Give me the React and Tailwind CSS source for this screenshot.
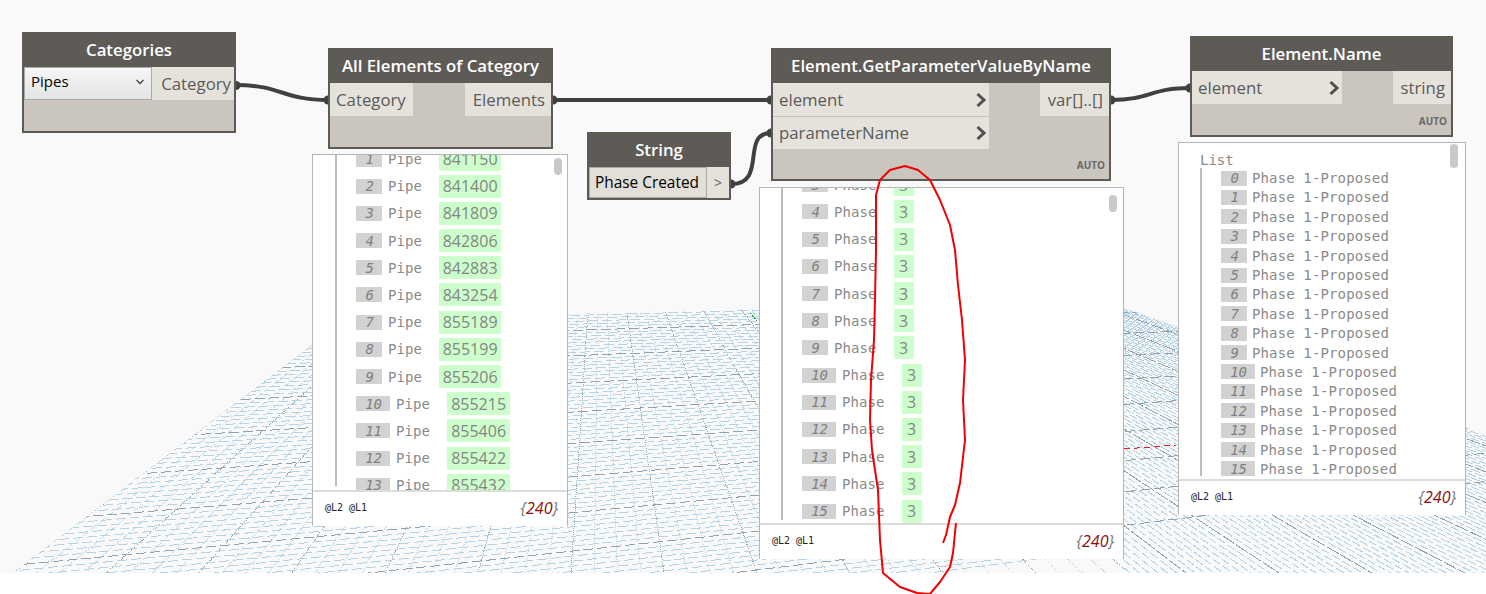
import React from "react";

const VA = [600, 125];
const VB = [3500, 237];

function Grid() {
  const a = [];
  const dy = 573 - VA[1];
  const t = 800;
  for (let k = -4; k < 60; k++) {
    const px = 13 + k * 23.25;
    a.push(
      <line
        key={"a" + k}
        x1={VA[0]}
        y1={VA[1]}
        x2={VA[0] + ((px - VA[0]) * t) / dy}
        y2={VA[1] + t}
        stroke={k % 4 === 0 ? "#8fa3b3" : "#bcd6e7"}
        strokeWidth="1"
        strokeDasharray="1 1"
      />
    );
  }
  const r = [];
  for (let k = 0; k < 100; k++) {
    const px = 1000 + k * 9.3;
    r.push(
      <line
        key={"r" + k}
        x1={VA[0]}
        y1={VA[1]}
        x2={VA[0] + ((px - VA[0]) * t) / dy}
        y2={VA[1] + t}
        stroke={k % 10 === 0 ? "#8fa3b3" : "#b5d3e6"}
        strokeWidth="1"
        strokeDasharray={k % 10 === 0 ? "14 2" : "9 3"}
        strokeDashoffset={(k * 5) % 12}
      />
    );
  }
  const b = [];
  const bm = [];
  let y = 298;
  let i = 0;
  while (y < 660) {
    const major = i % 8 === 5;
    const sl = (VB[1] - y) / (VB[0] - 300);
    const line = (
      <line
        key={"b" + i}
        x1={-20}
        y1={y + sl * -320}
        x2={1500}
        y2={y + sl * 1200}
        stroke={major ? "#8fa3b3" : "#b5d3e6"}
        strokeWidth="1"
        strokeDasharray="10 4"
        strokeDashoffset={(i * 5) % 14}
      />
    );
    b.push(line);
    if (major) bm.push(line);
    y += 3 + ((y - 298) / 275) * 2.4;
    i++;
  }
  return (
    <svg className="absolute left-0 top-0" width="1486" height="594" shapeRendering="crispEdges">
      <defs>
        <clipPath id="gridclip">
          <polygon points="13,573 345,320 1100,300 1124,308 1124,573" />
        </clipPath>
        <clipPath id="gridclipr">
          <polygon points="1124,308 1486,435 1486,573 1124,573" />
        </clipPath>
      </defs>
      <g clipPath="url(#gridclip)">
        {a}
        {b}
      </g>
      <g clipPath="url(#gridclipr)">
        {r}
        {bm}
      </g>
      <line x1="750" y1="313" x2="758" y2="322" stroke="#1a9a3a" strokeWidth="1" strokeDasharray="2 1" />
      <line x1="1124" y1="449" x2="1176" y2="445" stroke="#e02020" strokeWidth="1" strokeDasharray="6 4" />
    </svg>
  );
}

function Wires() {
  return (
    <svg className="absolute left-0 top-0" width="1486" height="594" fill="none">
      <g stroke="#404040" strokeWidth="4">
        <path d="M236 85 C282 85 282 100 328 100" />
        <path d="M553 100 L771 100" />
        <path d="M731 184 C768 184 740 133 771 133" />
        <path d="M1111 100 C1150 100 1150 88 1190 88" />
      </g>
      <g fill="#404040">
        <path d="M236 81 a4.5 4.5 0 0 1 0 9 z" />
        <path d="M553 95.5 a4.5 4.5 0 0 1 0 9 z" />
        <path d="M731 179.5 a4.5 4.5 0 0 1 0 9 z" />
        <path d="M1111 95.5 a4.5 4.5 0 0 1 0 9 z" />
        <path d="M328 95.5 a4.5 4.5 0 0 0 0 9 z" />
        <path d="M771 95.5 a4.5 4.5 0 0 0 0 9 z" />
        <path d="M771 128.5 a4.5 4.5 0 0 0 0 9 z" />
        <path d="M1190 83.5 a4.5 4.5 0 0 0 0 9 z" />
      </g>
    </svg>
  );
}

function Scribble() {
  return (
    <svg className="absolute left-0 top-0" width="1486" height="594" fill="none">
      <path
        d="M943 543 L946 535 L950 517 L955 505 L960 483 L965 440 L963 400 L965 360 L962 320 L958 285 L955 250 L950 225 L940 200 L930 180 L918 170 L905 166 L890 170 L880 180 L876 195 L876 250 L875 300 L874 340 L871 380 L870 420 L872 450 L878 490 L880 540 L883 573 L900 587 L917 593 L930 594 L940 582 L950 567 L953 553 L956 523"
        stroke="#f00000"
        strokeWidth="2"
        strokeLinejoin="round"
      />
    </svg>
  );
}

function Chevron() {
  return (
    <svg width="12" height="16" viewBox="0 0 12 16" fill="none">
      <path d="M2.5 2 L9 8 L2.5 14" stroke="#4f4f4f" strokeWidth="3" />
    </svg>
  );
}

function Title({ children }) {
  return (
    <div className="h-[35px] shrink-0 pt-[2px] bg-[#5e5b57] flex items-center justify-center text-white text-[16.8px] font-semibold leading-none">
      {children}
    </div>
  );
}

function Auto() {
  return <div className="absolute right-[4px] bottom-[9px] text-[10px] font-bold text-[#6b6864] leading-none">AUTO</div>;
}

function Idx({ n }) {
  const two = n > 9;
  return (
    <div
      className={
        two
          ? "w-[34px] h-[15px] shrink-0 bg-[#d2d2d2] flex items-center justify-end pr-[8px] text-[14px] italic text-[#808080] leading-none"
          : "w-[26px] h-[15px] shrink-0 bg-[#d2d2d2] flex items-center justify-end pr-[8px] text-[14px] italic text-[#808080] leading-none"
      }
    >
      {n}
    </div>
  );
}

function Footer() {
  return (
    <div className="h-[36px] shrink-0 border-t-2 border-[#dcdcdc] bg-white flex items-center justify-between pl-[12px] pr-[9px] pb-[2px]">
      <span className="text-[10px] text-[#222] font-['DejaVu_Sans_Mono',monospace] leading-none">@L2 @L1</span>
      <span className="text-[16px] italic leading-none font-['Open_Sans',sans-serif] text-[#8b1010]">
        <span className="text-[#777]">{"{"}</span>240<span className="text-[#777]">{"}"}</span>
      </span>
    </div>
  );
}

function WideRows({ rows, label, val, valW2, valW }) {
  return rows.map((n) => (
    <div key={n} className="h-[27.2px] shrink-0 flex items-center">
      <Idx n={n} />
      <span className="ml-[6px] text-[14px] tracking-[0.1px] text-[#8a8a8a] leading-none whitespace-nowrap">{label}</span>
      <span
        className="h-[23px] bg-[#ccffcc] flex items-center justify-center text-[16px] text-[#858585] font-['Open_Sans',sans-serif] leading-none"
        style={{ width: valW, marginLeft: valW2 }}
      >
        {val[n]}
      </span>
    </div>
  ));
}

const pipeVals = {
  1: "841150", 2: "841400", 3: "841809", 4: "842806", 5: "842883", 6: "843254", 7: "855189",
  8: "855199", 9: "855206", 10: "855215", 11: "855406", 12: "855422", 13: "855432",
};
const threes = Object.fromEntries(Array.from({ length: 16 }, (_, i) => [i, "3"]));

function Scrollbar({ className }) {
  return <div className={"absolute w-[8px] bg-[#c9c9c9] rounded-[4px] " + className} />;
}

export default function App() {
  return (
    <div className="relative w-[1486px] h-[594px] overflow-hidden bg-white font-['Open_Sans',sans-serif]">
      <div className="h-[573px] bg-[#f9f9f9]" />
      <Grid />
      <Wires />

      {/* Categories */}
      <div className="absolute left-[22px] top-[32px] w-[214px] h-[101px] flex flex-col bg-[#cac6bf] border-2 border-t-0 border-[#5e5b57] box-border">
        <div className="-mx-[2px]"><Title>Categories</Title></div>
        <div className="h-[33px] flex">
          <div className="w-[128px] flex items-center justify-between pl-[6px] pr-[6px] border border-[#aaa] bg-gradient-to-b from-[#f6f6f6] to-[#e4e4e4] text-[15px] text-black">
            <span className="-mt-[5px]">Pipes</span>
            <svg width="10" height="10" viewBox="0 0 10 10" fill="none" className="-mt-[4px]"><path d="M1.5 3 L5 6.5 L8.5 3" stroke="#444" strokeWidth="1.3" /></svg>
          </div>
          <div className="flex-1 bg-[#e5e2dc] flex items-center justify-end pr-[3px] text-[16.8px] text-[#5a5a5a]">Category</div>
        </div>
      </div>

      {/* All Elements of Category */}
      <div className="absolute left-[328px] top-[48px] w-[225px] h-[101px] flex flex-col bg-[#cac6bf] border-2 border-t-0 border-[#5e5b57] box-border">
        <div className="-mx-[2px]"><Title>All Elements of Category</Title></div>
        <div className="h-[33px] flex justify-between">
          <div className="w-[83px] bg-[#e5e2dc] flex items-center pl-[6px] text-[16.8px] text-[#5a5a5a]">Category</div>
          <div className="w-[86px] bg-[#e5e2dc] flex items-center justify-end pr-[6px] text-[16.8px] text-[#5a5a5a]">Elements</div>
        </div>
      </div>

      {/* GetParameterValueByName */}
      <div className="absolute left-[771px] top-[48px] w-[340px] h-[133px] flex flex-col bg-[#cac6bf] border-2 border-t-0 border-[#5e5b57] box-border">
        <div className="-mx-[2px]"><Title>Element.GetParameterValueByName</Title></div>
        <div className="flex justify-between">
          <div className="w-[216px] flex flex-col gap-[1px]">
            <div className="h-[33px] bg-[#e5e2dc] flex items-center justify-between pl-[6px] pr-[2px] text-[16.8px] text-[#5a5a5a]">element<Chevron /></div>
            <div className="h-[32px] bg-[#e5e2dc] flex items-center justify-between pl-[6px] pr-[2px] text-[16.8px] text-[#5a5a5a]">parameterName<Chevron /></div>
          </div>
          <div className="w-[69px] h-[33px] bg-[#e5e2dc] flex items-center justify-end pr-[6px] text-[16.8px] text-[#5a5a5a]">var[]..[]</div>
        </div>
        <Auto />
      </div>

      {/* String */}
      <div className="absolute left-[587px] top-[132px] w-[144px] h-[68px] flex flex-col bg-[#cac6bf] border-2 border-t-0 border-[#5e5b57] box-border">
        <div className="-mx-[2px]"><Title>String</Title></div>
        <div className="flex-1 flex">
          <div className="w-[118px] bg-[#e2dfd8] border border-[#aaa] flex items-center pl-[5px] text-[15.4px] text-black whitespace-nowrap">Phase Created</div>
          <div className="flex-1 bg-[#e5e2dc] flex items-center justify-center text-[14px] text-[#666]">&gt;</div>
        </div>
      </div>

      {/* Element.Name */}
      <div className="absolute left-[1190px] top-[36px] w-[263px] h-[101px] flex flex-col bg-[#cac6bf] border-2 border-t-0 border-[#5e5b57] box-border">
        <div className="-mx-[2px]"><Title>Element.Name</Title></div>
        <div className="h-[33px] flex justify-between">
          <div className="w-[150px] bg-[#e5e2dc] flex items-center justify-between pl-[6px] pr-[2px] text-[16.8px] text-[#5a5a5a]">element<Chevron /></div>
          <div className="w-[58px] bg-[#e5e2dc] flex items-center justify-end pr-[6px] text-[16.8px] text-[#5a5a5a]">string</div>
        </div>
        <Auto />
      </div>

      {/* Panel 1 */}
      <div className="absolute left-[312px] top-[154px] w-[256px] h-[372px] flex flex-col bg-white border border-[#b5b5b5] border-b-0 font-['DejaVu_Sans_Mono',monospace]">
        <div className="relative flex-1 overflow-hidden">
          <div className="absolute left-[22px] top-0 bottom-[4px] w-[2px] bg-[#bdbdbd]" />
          <div className="pl-[43px] -mt-[9.6px] flex flex-col">
            <WideRows rows={[1, 2, 3, 4, 5, 6, 7, 8, 9]} label="Pipe" val={pipeVals} valW={62} valW2={17} />
            <WideRows rows={[10, 11, 12, 13]} label="Pipe" val={pipeVals} valW={63} valW2={17} />
          </div>
          <Scrollbar className="left-[241px] top-[3px] h-[17px]" />
        </div>
        <Footer />
      </div>

      {/* Panel 2 */}
      <div className="absolute left-[759px] top-[187px] w-[365px] h-[372px] flex flex-col bg-white border border-[#b5b5b5] border-b-0 font-['DejaVu_Sans_Mono',monospace]">
        <div className="relative flex-1 overflow-hidden">
          <div className="absolute left-[21px] top-0 bottom-[3px] w-[2px] bg-[#bdbdbd]" />
          <div className="pl-[42px] -mt-[16.8px] flex flex-col">
            <WideRows rows={[3, 4, 5, 6, 7, 8, 9]} label="Phase" val={threes} valW={20} valW2={17} />
            <WideRows rows={[10, 11, 12, 13, 14, 15]} label="Phase" val={threes} valW={20} valW2={17} />
          </div>
          <Scrollbar className="left-[349px] top-[7px] h-[17px]" />
        </div>
        <Footer />
      </div>

      {/* Panel 3 */}
      <div className="absolute left-[1178px] top-[142px] w-[288px] h-[373px] flex flex-col bg-white border border-[#b5b5b5] border-b-0 font-['DejaVu_Sans_Mono',monospace]">
        <div className="relative flex-1 overflow-hidden">
          <div className="absolute left-[21px] top-[25px] bottom-[3px] w-[2px] bg-[#bdbdbd]" />
          <div className="pl-[21px] pt-[10px] text-[14px] text-[#8a8a8a] leading-none">List</div>
          <div className="pl-[42px] pt-[1.4px] flex flex-col">
            {Array.from({ length: 16 }, (_, n) => (
              <div key={n} className="h-[19.4px] shrink-0 flex items-center">
                <Idx n={n} />
                <span className="ml-[5px] text-[14px] tracking-[0.13px] text-[#8a8a8a] leading-none whitespace-nowrap">Phase 1-Proposed</span>
              </div>
            ))}
          </div>
          <Scrollbar className="left-[271px] top-[1px] h-[24px]" />
        </div>
        <Footer />
      </div>

      <Scribble />
    </div>
  );
}
